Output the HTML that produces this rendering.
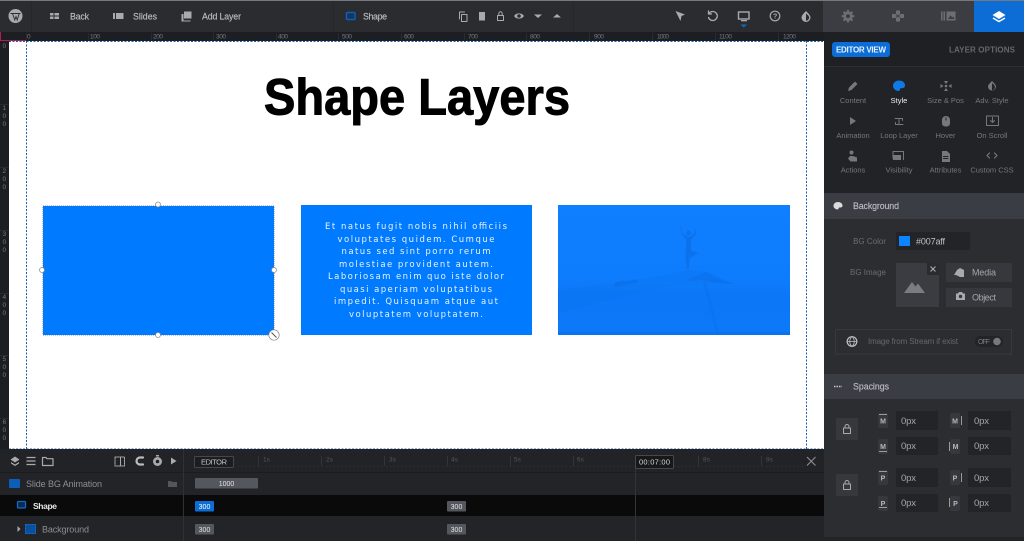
<!DOCTYPE html>
<html lang="en">
<head>
<meta charset="utf-8">
<title>Shape Layers</title>
<style>
html,body{margin:0;padding:0;width:1024px;height:541px;overflow:hidden;background:#2c2d31}
svg{display:block;filter:blur(.25px)}
text{font-family:"Liberation Sans",Arial,sans-serif}
.t{font-size:9px;fill:#a5a6a8}
.tb{font-size:8.800px;fill:#bcbdbf;stroke:#bcbdbf;stroke-width:.15px}
.r{font-size:6.500px;fill:#77787c}
.l{font-size:7.500px;fill:#76777b;text-anchor:middle}
.g{font-size:8px;fill:#6b6c70}
.v{font-size:9.500px;fill:#a5a6a8}
.body{font-size:8.500px;fill:#e9f3ff;text-anchor:middle;font-family:"DejaVu Sans",sans-serif}
.bar{font-size:7px;fill:#e4e4e4;text-anchor:middle}
.ts{font-size:6.500px;fill:#55565a}
.i{fill:#a9aaac}
.d{fill:#77787c}
.ln{fill:none;stroke-linecap:round;stroke-linejoin:round}
</style>
</head>
<body>
<svg width="1024" height="541" viewBox="0 0 1024 541" xmlns="http://www.w3.org/2000/svg">
<defs>
<linearGradient id="im" x1="0" y1="0" x2="0" y2="1"><stop offset="0" stop-color="#0f7eff"/><stop offset=".55" stop-color="#0e7dfd"/><stop offset=".68" stop-color="#0c78f7"/><stop offset="1" stop-color="#0b79f8"/></linearGradient>
</defs>

<!-- top bar -->
<rect width="1024" height="32" fill="#2b2c30"/>
<rect width="1024" height="1" fill="#77787b"/>
<rect x="31" y="1" width="1" height="31" fill="#26272a"/>
<rect x="333" y="1" width="1" height="31" fill="#26272a"/>
<rect x="573" y="1" width="1" height="31" fill="#26272a"/>
<circle cx="15.500" cy="16" r="7" fill="#a9aaac"/>
<path d="M10.500 13.500h10M12.500 13.500l2.300 6.500 1.200-3.500 1.200 3.500 2-6.500" fill="none" stroke="#2b2c30" stroke-width=".9"/>
<path class="i" d="M50 13h3.500v2.500H50zM54.500 13H59v2.500h-4.500zM50 16.500h3.500V19H50zM54.500 16.500H59V19h-4.500z"/>
<text class="tb" x="70" y="19.500" textLength="19">Back</text>
<path class="i" d="M113 13h2v6h-2zM116 13h7.500v6H116z"/>
<text class="tb" x="133" y="19.500" textLength="24">Slides</text>
<path class="i" d="M184 11.500h7.500v7H184zM181.500 14h2v6.500h7v1h-9z"/>
<text class="tb" x="202" y="19.500" textLength="39">Add Layer</text>
<rect x="346.500" y="12.500" width="8.500" height="7" rx="1" fill="#14355c" stroke="#0e5fb5" stroke-width="1.500"/>
<text class="tb" x="363" y="19.500" textLength="24">Shape</text>
<path class="ln" stroke="#a9aaac" d="M459.500 19v-7h5M461.500 14.500h5.500v7h-5.500z"/>
<rect x="479" y="12" width="6" height="8.500" fill="#a9aaac"/>
<path class="ln" stroke="#a9aaac" d="M497.500 15.500h6v5h-6zM498.800 15.500v-2a1.700 1.700 0 0 1 3.400 0v2"/>
<path class="i" d="M514 16c2-3.500 8-3.500 10 0-2 3.500-8 3.500-10 0z"/>
<circle cx="519" cy="16" r="1.800" fill="#2b2c30"/>
<path class="i" d="M534 14.500h8l-4 3.500zM553 17.500h8l-4-3.500z"/>
<path class="i" d="M675.500 11l9.500 3.500-3.500 1.500-1 5z"/>
<path class="ln" stroke="#a9aaac" stroke-width="1.300" d="M709 13.500a4.500 4.500 0 1 1-.5 4M708.500 11v3h3"/>
<rect x="738.500" y="12" width="10.500" height="7" fill="none" stroke="#a9aaac" stroke-width="1.400"/>
<rect x="741" y="20" width="6" height="1.300" fill="#a9aaac"/>
<path fill="#0e6bc9" d="M740.500 24.500h6.500l-3.250 3z"/>
<circle cx="775" cy="16" r="4.800" fill="none" stroke="#a9aaac" stroke-width="1.200"/>
<text x="773" y="18.500" font-size="7" font-weight="bold" fill="#a9aaac">?</text>
<path class="i" d="M806 11c3 3 4.500 4.800 4.500 6.500a4.500 4.500 0 0 1-9 0C801.500 15.800 803 14 806 11z"/>
<path fill="#2b2c30" d="M806 13.500v7.200a3.200 3.200 0 0 0 3.200-3.200c0-1.100-1.200-2.500-3.200-4z"/>

<!-- right tabs -->
<rect x="823" y="0" width="151" height="32" fill="#3b3d43"/>
<rect x="823" y="0" width="151" height="1" fill="#77787b"/>
<rect x="974" y="1" width="50" height="31" fill="#0b6dd5"/>
<path stroke="#6c6e73" stroke-width="2.200" d="M848 10v12.500M841.800 16.200h12.500M843.600 11.800l8.800 8.800M852.400 11.800l-8.800 8.800"/>
<circle cx="848" cy="16.200" r="4.700" fill="#6c6e73"/>
<circle cx="848" cy="16.200" r="2" fill="#3b3d43"/>
<path fill="#6c6e73" d="M896 10.500h4v3.500l-2 1.500-2-1.500zM896 21.500h4V18l-2-1.500-2 1.500zM892 14h3.500l1.500 2-1.500 2H892zM904 14h-3.500L899 16l1.500 2h3.500z"/>
<path fill="#6c6e73" d="M941 11.500h1.500v9H941zM943.500 11.500h1.500v9h-1.500zM946.500 11.500h9v9h-9z"/>
<path fill="#3b3d43" d="M948 19l2.500-3.500 2 2 1-1 1 2.500z"/>
<path fill="#fff" d="M999 11l6.500 4-6.500 4-6.500-4z"/>
<path fill="none" stroke="#fff" stroke-width="1.500" d="M993 18l6 3.500 6-3.500"/>

<!-- rulers -->
<rect x="0" y="32" width="824" height="9" fill="#1d1e21"/>
<path fill="none" stroke="#b21c55" d="M.5 32v8.500H26"/>
<g fill="#2a2b2e">
<rect x="26" y="33" width="1" height="7"/><rect x="88" y="33" width="1" height="7"/><rect x="151" y="33" width="1" height="7"/><rect x="213" y="33" width="1" height="7"/><rect x="276" y="33" width="1" height="7"/><rect x="338" y="33" width="1" height="7"/><rect x="401" y="33" width="1" height="7"/><rect x="464" y="33" width="1" height="7"/><rect x="526" y="33" width="1" height="7"/><rect x="589" y="33" width="1" height="7"/><rect x="652" y="33" width="1" height="7"/><rect x="715" y="33" width="1" height="7"/><rect x="778" y="33" width="1" height="7"/>
</g>
<text class="r" x="27" y="38.500">0</text>
<text class="r" x="90" y="38.500" textLength="10">100</text>
<text class="r" x="153" y="38.500" textLength="10">200</text>
<text class="r" x="216" y="38.500" textLength="10">300</text>
<text class="r" x="278" y="38.500" textLength="10">400</text>
<text class="r" x="342" y="38.500" textLength="10">500</text>
<text class="r" x="404" y="38.500" textLength="10">600</text>
<text class="r" x="468" y="38.500" textLength="10">700</text>
<text class="r" x="530" y="38.500" textLength="10">800</text>
<text class="r" x="594" y="38.500" textLength="10">900</text>
<text class="r" x="657" y="38.500" textLength="12">1000</text>
<text class="r" x="719" y="38.500" textLength="13">1100</text>
<text class="r" x="783" y="38.500" textLength="13">1200</text>

<rect x="0" y="41" width="9" height="408" fill="#1d1e21"/>
<g fill="#2a2b2e"><rect x="0" y="104" width="9" height="1"/><rect x="0" y="167" width="9" height="1"/><rect x="0" y="230" width="9" height="1"/><rect x="0" y="293" width="9" height="1"/><rect x="0" y="355" width="9" height="1"/><rect x="0" y="418" width="9" height="1"/></g>
<text class="r" x="2.500" y="48">0</text>
<text class="r" x="2.500" y="110">1</text><text class="r" x="2.500" y="118">0</text><text class="r" x="2.500" y="126">0</text>
<text class="r" x="2.500" y="173">2</text><text class="r" x="2.500" y="181">0</text><text class="r" x="2.500" y="189">0</text>
<text class="r" x="2.500" y="236">3</text><text class="r" x="2.500" y="244">0</text><text class="r" x="2.500" y="252">0</text>
<text class="r" x="2.500" y="299">4</text><text class="r" x="2.500" y="307">0</text><text class="r" x="2.500" y="315">0</text>
<text class="r" x="2.500" y="361">5</text><text class="r" x="2.500" y="369">0</text><text class="r" x="2.500" y="377">0</text>
<text class="r" x="2.500" y="424">6</text><text class="r" x="2.500" y="432">0</text><text class="r" x="2.500" y="440">0</text>

<!-- canvas -->
<rect x="9" y="41" width="815" height="408" fill="#fff"/>
<path fill="none" stroke="#1e5fa8" stroke-dasharray="2 1.500" d="M9 41.500H824M26.500 41V449M806.500 41V449M9 449H824"/>

<text x="264" y="114.500" font-size="51" font-weight="bold" fill="#000" stroke="#000" stroke-width="1" textLength="306" lengthAdjust="spacingAndGlyphs">Shape Layers</text>

<!-- shape 1 -->
<rect x="43" y="206" width="231" height="129" fill="#007aff"/>
<rect x="43" y="206" width="231" height="129" fill="none" stroke="#2c6fbf" stroke-width=".8" stroke-dasharray="1 1"/>
<g fill="#fff" stroke="#888" stroke-width=".7">
<circle cx="158" cy="204.500" r="2.500"/><circle cx="42" cy="270" r="2.500"/><circle cx="274" cy="270" r="2.500"/><circle cx="158" cy="335" r="2.500"/>
<circle cx="274" cy="335" r="5.200"/>
</g>
<path stroke="#555" fill="none" d="M271.500 332.500l5 5"/>

<!-- shape 2 -->
<rect x="301" y="205" width="231" height="130" fill="#007aff"/>
<text class="body" x="416" y="229" textLength="182">Et natus fugit nobis nihil officiis</text>
<text class="body" x="416" y="242" textLength="157">voluptates quidem. Cumque</text>
<text class="body" x="416" y="254" textLength="149">natus sed sint porro rerum</text>
<text class="body" x="416" y="267" textLength="154">molestiae provident autem.</text>
<text class="body" x="416" y="279" textLength="176">Laboriosam enim quo iste dolor</text>
<text class="body" x="416" y="292" textLength="152">quasi aperiam voluptatibus</text>
<text class="body" x="416" y="304" textLength="164">impedit. Quisquam atque aut</text>
<text class="body" x="416" y="317" textLength="134">voluptatem voluptatem.</text>

<!-- shape 3 -->
<rect x="558" y="205" width="232" height="130" fill="url(#im)"/>
<g fill="#0b70e8">
<path d="M680 224l1.500 10 4.500 5v12l-.5 6 1.500 12h2l.5-11 6.500-3.500 2-1.500-7-2.500 0-11 4.500-5 1-10-2 9-4 3h-3.500l-4.500-3z" opacity=".85"/>
<circle cx="688.500" cy="233" r="2.300" opacity=".85"/>
<path d="M558 290l60-7 35-6 35-7 20 2 20 9 7 3-30 0-30 1-40 8-77 20z" opacity=".22"/>
<path d="M614 284c3-3 10-4 14-3l8-2 3 3-24 5z" opacity=".75"/>
<path d="M686 280l20-8 16 8 12 4-16-1-18-3-12 1z" opacity=".6"/>
<path d="M706 282l7 26 6 27h-2l-7-26-7-26z" opacity=".4"/>
<rect x="558" y="332" width="232" height="3" opacity=".6"/>
</g>

<!-- right panel -->
<rect x="824" y="32" width="200" height="38" fill="#1f2023"/>
<rect x="824" y="66" width="200" height="1" fill="#2c2d31"/>
<rect x="824" y="67" width="200" height="126" fill="#222327"/>
<rect x="832" y="42" width="58" height="15" rx="3" fill="#0b6dd5"/>
<text x="836" y="52.500" font-size="8" font-weight="bold" fill="#e8f2ff" textLength="50">EDITOR VIEW</text>
<text x="949" y="52.500" font-size="8" font-weight="bold" fill="#66676b" textLength="66">LAYER OPTIONS</text>

<!-- subtab icons -->
<path class="d" d="M848 91l1-3.500 6-6 2.500 2.500-6 6z"/>
<path fill="#0f7ae5" d="M899 80.500c3.500 0 6 2 6 4.800s-2 3-4 3c-.8 0-1 .4-1 .9s-.4 1.800-1.500 1.800c-3 0-5.500-2.500-5.500-5.200s2.500-5.300 6-5.300z"/>
<path class="d" d="M944 81h4l-2 3zM944 91h4l-2-3zM940.500 84v4l3-2zM951.500 84v4l-3-2z"/>
<circle cx="946" cy="86" r="1.300" fill="#77787c"/>
<path class="d" d="M992 81c2.500 2.500 4 4 4 5.500a4 4 0 0 1-8 0c0-1.500 1.500-3 4-5.500z"/>
<path fill="#222327" d="M992 83v7.300a3 3 0 0 0 2.800-3.800c0-.8-1-2-2.800-3.500z"/>
<path class="d" d="M850 117v8l6-4z"/>
<path class="ln" stroke="#77787c" d="M895 118.500h7.500v2M903 124.500h-7.500v-2M899 119.500v4"/>
<path class="d" d="M946 116c2.500 0 4 2 4 4v3c0 2.500-1.500 3.500-4 3.500s-4-1-4-3.500v-3c0-2 1.500-4 4-4z"/>
<rect x="945.500" y="117.500" width="1" height="3" fill="#222327"/>
<path class="ln" stroke="#77787c" d="M988 116h10.500v9.500H986.500V116h1.500M992.500 117.500v5M990.500 120.500l2 2 2-2"/>
<path class="d" d="M851.500 150.500a2 2 0 1 1 0 4 2 2 0 1 1 0-4zM850 156h3l4 1.500v4h-6.500l-2.500-3z"/>
<path class="ln" stroke="#77787c" d="M893 158v-6.500h10.500v8"/>
<rect x="893" y="155" width="8" height="5" fill="#77787c"/>
<path class="d" d="M942 151h5l3 3v8h-8z"/>
<path class="ln" stroke="#222327" d="M943.500 156.500h4.500M943.500 158.500h4.500"/>
<path class="ln" stroke="#77787c" stroke-width="1.200" d="M989.500 153l-2.500 2.500 2.500 2.500M994.500 153l2.500 2.500-2.500 2.500"/>

<text class="l" x="853" y="103">Content</text>
<text class="l" x="899" y="103" style="fill:#eee">Style</text>
<text class="l" x="945.500" y="103">Size &amp; Pos</text>
<text class="l" x="992" y="103">Adv. Style</text>
<text class="l" x="853" y="138">Animation</text>
<text class="l" x="899" y="138">Loop Layer</text>
<text class="l" x="945.500" y="138">Hover</text>
<text class="l" x="992" y="138">On Scroll</text>
<text class="l" x="853" y="172.500">Actions</text>
<text class="l" x="899" y="172.500">Visibility</text>
<text class="l" x="945.500" y="172.500">Attributes</text>
<text class="l" x="992" y="172.500">Custom CSS</text>

<!-- background section -->
<rect x="824" y="193" width="200" height="26" fill="#3a3d44"/>
<path fill="#dcdcdc" d="M838 202c2.500 0 4.500 1.500 4.500 3.500s-1.500 2-3 2c-.6 0-.8.5-.8.8s-.3 1.200-1 1.200c-2.200 0-4.200-1.500-4.200-3.700s2-3.800 4.500-3.800z"/>
<text class="tb" x="853" y="209" textLength="46">Background</text>
<rect x="824" y="219" width="200" height="155" fill="#2c2d31"/>

<text class="g" x="886" y="244" text-anchor="end">BG Color</text>
<rect x="896" y="232" width="74" height="18" fill="#232427"/>
<rect x="899" y="236" width="11" height="10" fill="#0a84ff"/>
<text class="t" x="916" y="244.500" textLength="29" style="fill:#c0c1c3">#007aff</text>

<text class="g" x="886" y="275" text-anchor="end">BG Image</text>
<rect x="896" y="263" width="43" height="44" fill="#3a3c42"/>
<path fill="#7b7c80" d="M904 293l8-11 3.500 4.500 2.500-3 7 9.500z"/>
<rect x="927" y="263" width="12" height="12" fill="#2a2b2e"/>
<path stroke="#b0b0b2" d="M930.500 266.500l5 5M935.500 266.500l-5 5"/>
<rect x="946" y="263" width="66" height="19" fill="#36383e"/>
<rect x="946" y="288" width="66" height="19" fill="#36383e"/>
<path class="i" d="M957 270l3-2 4 2v7h-4l-4-2-2 0z"/>
<text class="t" x="972" y="275.500" textLength="24">Media</text>
<path class="i" d="M956 293.500h2l1-1.500h3l1 1.500h2v6.500h-9z"/>
<circle cx="960.500" cy="296.500" r="1.700" fill="#36383e"/>
<text class="t" x="972" y="300.500" textLength="24">Object</text>

<rect x="835.500" y="329.500" width="176" height="24.500" fill="none" stroke="#37383d"/>
<circle cx="852" cy="341.500" r="4.800" fill="none" stroke="#c0c0c2" stroke-width="1.200"/>
<path class="ln" stroke="#c0c0c2" stroke-width=".8" d="M847 341.500h10M852 336.500c-3 3-3 7 0 10M852 336.500c3 3 3 7 0 10"/>
<text class="g" x="868" y="344" textLength="90" style="fill:#66676b">Image from Stream if exist</text>
<rect x="975" y="336" width="28" height="11" rx="5" fill="#232427"/>
<text x="978" y="344" font-size="7" fill="#77787c" textLength="12">OFF</text>
<circle cx="997" cy="341.500" r="3.800" fill="#77787c"/>

<!-- spacings -->
<rect x="824" y="374" width="200" height="25" fill="#3a3d44"/>
<path stroke="#c8c8c8" stroke-width="1.500" stroke-dasharray="1.500 1" d="M834 386.500h8"/>
<text class="tb" x="853" y="389.500" textLength="36">Spacings</text>
<rect x="824" y="399" width="200" height="138" fill="#2c2d31"/>
<rect x="824" y="537" width="200" height="4" fill="#232427"/>

<rect x="836" y="418" width="22" height="22" fill="#36383e"/>
<rect x="836" y="474" width="22" height="22" fill="#36383e"/>
<path class="ln" stroke="#a9aaac" d="M843.500 428h7v5.500h-7zM845 428v-1.500a2 2 0 0 1 4 0v1.500"/>
<path class="ln" stroke="#a9aaac" d="M843.500 484h7v5.500h-7zM845 484v-1.500a2 2 0 0 1 4 0v1.500"/>

<g fill="#232427">
<rect x="896" y="411" width="42" height="19"/><rect x="968" y="411" width="43" height="19"/>
<rect x="896" y="437" width="42" height="18"/><rect x="968" y="437" width="43" height="18"/>
<rect x="896" y="468" width="42" height="19"/><rect x="968" y="468" width="43" height="19"/>
<rect x="896" y="494" width="42" height="18"/><rect x="968" y="494" width="43" height="18"/>
</g>
<text class="v" x="901" y="424" textLength="15">0px</text><text class="v" x="974" y="424" textLength="15">0px</text>
<text class="v" x="901" y="449" textLength="15">0px</text><text class="v" x="974" y="449" textLength="15">0px</text>
<text class="v" x="901" y="481" textLength="15">0px</text><text class="v" x="974" y="481" textLength="15">0px</text>
<text class="v" x="901" y="506" textLength="15">0px</text><text class="v" x="974" y="506" textLength="15">0px</text>
<g fill="#37383d">
<rect x="878" y="413" width="10" height="15" rx="2"/><rect x="950" y="413" width="10" height="15" rx="2"/>
<rect x="878" y="439" width="10" height="15" rx="2"/><rect x="950" y="439" width="10" height="15" rx="2"/>
<rect x="878" y="470" width="10" height="15" rx="2"/><rect x="950" y="470" width="10" height="15" rx="2"/>
<rect x="878" y="496" width="10" height="15" rx="2"/><rect x="950" y="496" width="10" height="15" rx="2"/>
</g>
<g font-size="7" font-weight="bold" fill="#b8b9bb" text-anchor="middle">
<text x="883" y="423.500">M</text><text x="955" y="423.500">M</text><text x="883" y="449">M</text><text x="955.500" y="449">M</text>
<text x="883" y="480.500">P</text><text x="955" y="480.500">P</text><text x="883" y="506">P</text><text x="955.500" y="506">P</text>
</g>
<g fill="#9a9b9d">
<rect x="879" y="414" width="8" height="1"/><rect x="961" y="416" width="1" height="9"/>
<rect x="879" y="451" width="8" height="1"/><rect x="949" y="442" width="1" height="9"/>
<rect x="879" y="471" width="8" height="1"/><rect x="961" y="473" width="1" height="9"/>
<rect x="879" y="507" width="8" height="1"/><rect x="949" y="498" width="1" height="9"/>
</g>

<!-- timeline -->
<rect x="0" y="449" width="824" height="23" fill="#222327"/>
<rect x="0" y="472" width="824" height="23" fill="#232428"/>
<rect x="0" y="472" width="824" height="1" fill="#1b1c1e"/>
<rect x="0" y="495" width="824" height="21" fill="#0a0a0b"/>
<rect x="0" y="516" width="824" height="25" fill="#232428"/>
<rect x="183" y="449" width="1" height="92" fill="#303135"/>
<rect x="635" y="468" width="1" height="73" fill="#333438"/>

<path class="i" d="M15 456.500l4.500 3-4.500 3-4.500-3zM11 462l4 2.500 4-2.500v1.500l-4 2.500-4-2.500z"/>
<path stroke="#a9aaac" stroke-width="1.200" d="M26.500 457.500h9M26.500 461h9M26.500 464.500h9"/>
<path class="ln" stroke="#a9aaac" stroke-width="1.200" d="M42.500 457.500h3.500l1 1.200h6v6.800h-10.500z"/>
<path class="ln" stroke="#a9aaac" stroke-dasharray="1.500 1" d="M115 457h9.500v9H115z"/>
<rect x="120" y="457" width="1" height="9" fill="#a9aaac"/>
<path class="ln" stroke="#bbbcbe" stroke-width="2.200" stroke-linecap="butt" d="M143 457.500h-3a3.500 3.500 0 0 0 0 7h3"/>
<circle cx="157.500" cy="461.500" r="4.500" fill="#a9aaac"/>
<circle cx="157.500" cy="461.500" r="1.800" fill="#222327"/>
<rect x="156" y="455" width="3" height="1.500" fill="#a9aaac"/>
<path class="i" d="M171 457.500v7l5.500-3.500z"/>

<rect x="194.500" y="456.500" width="39" height="11" rx="1" fill="#1c1d20" stroke="#46474b"/>
<text x="214" y="464.500" font-size="7.500" fill="#c2c3c5" text-anchor="middle" textLength="26">EDITOR</text>
<path stroke="#34353a" stroke-dasharray="1 3" d="M238 466.500H805"/>
<g fill="#333438">
<rect x="258" y="456" width="1" height="10"/><rect x="321" y="456" width="1" height="10"/><rect x="384" y="456" width="1" height="10"/><rect x="447" y="456" width="1" height="10"/><rect x="510" y="456" width="1" height="10"/><rect x="573" y="456" width="1" height="10"/><rect x="698" y="456" width="1" height="10"/><rect x="761" y="456" width="1" height="10"/>
</g>
<text class="ts" x="263" y="461.500">1s</text><text class="ts" x="326" y="461.500">2s</text><text class="ts" x="389" y="461.500">3s</text><text class="ts" x="451" y="461.500">4s</text><text class="ts" x="514" y="461.500">5s</text><text class="ts" x="577" y="461.500">6s</text><text class="ts" x="703" y="461.500">8s</text><text class="ts" x="766" y="461.500">9s</text>
<rect x="635.500" y="455.500" width="38" height="13" rx="1" fill="#17181a" stroke="#46474b"/>
<text x="654.500" y="464.500" font-size="7.500" fill="#d6d6d8" text-anchor="middle" textLength="31">00:07:00</text>
<path stroke="#8a8b8e" stroke-width="1.200" d="M807 457l8.500 8.500M815.500 457l-8.500 8.500"/>

<rect x="9" y="479" width="11" height="9" rx="1" fill="#0b5fb8"/>
<text x="26" y="487" font-size="9" fill="#8d8e91" textLength="76">Slide BG Animation</text>
<path fill="#55565a" d="M168 481h3l1 1h5v5h-9z"/>
<rect x="195" y="478" width="63" height="10.500" rx="1" fill="#55575e"/>
<text class="bar" x="226.500" y="486">1000</text>

<rect x="17.500" y="501.500" width="8" height="6.500" rx="1" fill="#0d2a4c" stroke="#0e6bc9" stroke-width="1.300"/>
<text x="33" y="509" font-size="8.500" font-weight="bold" fill="#e6e6e8" textLength="24">Shape</text>
<rect x="195" y="501" width="19" height="10.500" rx="1" fill="#0b6dd5"/>
<text class="bar" x="204.500" y="509" style="fill:#fff">300</text>
<rect x="447" y="501" width="19" height="10.500" rx="1" fill="#55575e"/>
<text class="bar" x="456.500" y="509">300</text>

<path class="i" d="M17.500 526v6l3-3z"/>
<rect x="25" y="524" width="11" height="10" fill="#0d4f97"/>
<path stroke="#0b6dd5" fill="none" d="M25.500 524.500h10v9h-10z" stroke-dasharray="2 1"/>
<text x="42" y="532.500" font-size="9" fill="#8d8e91" textLength="47">Background</text>
<rect x="195" y="524" width="19" height="10.500" rx="1" fill="#55575e"/>
<text class="bar" x="204.500" y="532">300</text>
<rect x="447" y="524" width="19" height="10.500" rx="1" fill="#55575e"/>
<text class="bar" x="456.500" y="532">300</text>
</svg>
</body>
</html>
